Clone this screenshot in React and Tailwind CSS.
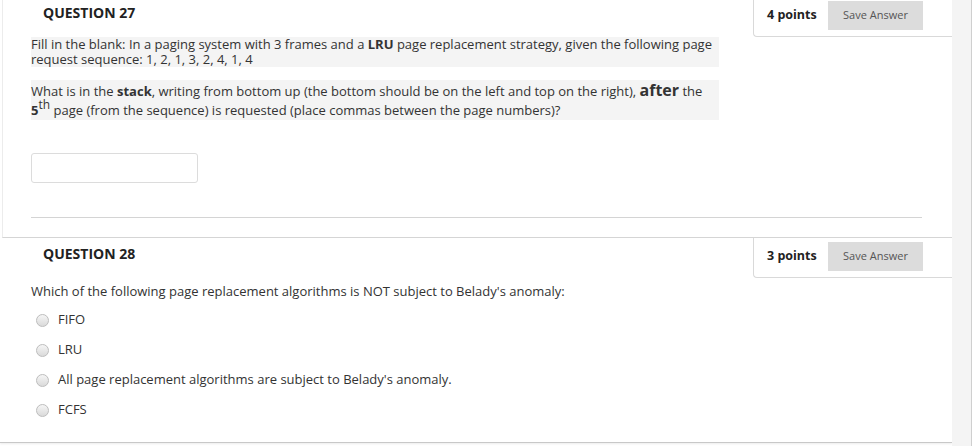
const Radio = ({ label }) => (
  <label className="flex items-center h-[30px]">
    <span className="w-[13px] h-[13px] ml-[5px] rounded-full border border-[#bdbdbd] bg-gradient-to-b from-[#f5f5f5] to-[#dadada]"></span>
    <span className="ml-[9px]">{label}</span>
  </label>
);

const PointsBox = ({ points, top }) => (
  <div
    className={`w-[199px] flex items-start border-l border-b border-[#d9d9d9] rounded-bl-[4px] ${top}`}
  >
    <div className="flex items-center h-[29px]">
      <span className="pl-[13px] w-[74px] font-bold text-[12.5px] text-[#222]">
        {points} points
      </span>
      <button className="w-[95px] h-[29px] bg-[#dcdcdc] text-[11px] text-[#555]">
        Save Answer
      </button>
    </div>
  </div>
);

export default function App() {
  const options = [
    "FIFO",
    "LRU",
    "All page replacement algorithms are subject to Belady's anomaly.",
    "FCFS",
  ];

  return (
    <div
      className="flex w-full h-[446px] bg-white text-[13px] text-[#333] overflow-hidden"
      style={{ fontFamily: '"Open Sans", "Liberation Sans", sans-serif' }}
    >
      <div className="w-[952px] flex flex-col">
        {/* question 27 */}
        <div className="ml-[2px] border-l border-[#ececec] border-b border-b-[#d6d6d6] h-[238px]">
          <div className="flex justify-between items-start">
            <div className="pl-[40px] pt-[5px] text-[14px] font-bold leading-[16px] text-[#222]">
              QUESTION 27
            </div>
            <div className="h-[37px] flex">
              <PointsBox points={4} top="pt-[1px] h-[37px]" />
            </div>
          </div>
          <div className="pl-[28px]">
            <p className="w-[688px] bg-[#f4f4f4] leading-[15px]">
              Fill in the blank: In a paging system with 3 frames and a <b>LRU</b> page
              replacement strategy, given the following page request sequence: 1, 2, 1, 3,
              2, 4, 1, 4
            </p>
            <p className="w-[688px] mt-[13px] pt-[2px] bg-[#f4f4f4] leading-[19px]">
              What is in the <b>stack</b>, writing from bottom up (the bottom should be on the
              left and top on the right),{" "}
              <b className="text-[16px] leading-none">after</b> the{" "}
              <b>
                5<sup className="font-normal text-[12px] leading-none">th</sup>
              </b>{" "}
              page (from the sequence) is requested (place commas between the page numbers)?
            </p>
            <input
              type="text"
              className="block mt-[33px] w-[167px] h-[30px] border border-[#dcdcdc] rounded-[3px] outline-none"
            />
            <div className="mt-[34px] w-[891px] h-px bg-[#d4d4d4]"></div>
          </div>
        </div>

        {/* question 28 */}
        <div className="flex-1 border-b border-[#c8c8c8] shadow-[0_1px_2px_rgba(0,0,0,0.08)] mb-[3px]">
          <div className="flex justify-between items-start">
            <div className="pl-[43px] pt-[8px] text-[14px] font-bold leading-[16px] text-[#222]">
              QUESTION 28
            </div>
            <PointsBox points={3} top="pt-[4px] h-[40px]" />
          </div>
          <div className="pl-[31px]">
            <p className="mt-[5px] leading-[16px]">
              Which of the following page replacement algorithms is NOT subject to Belady's
              anomaly:
            </p>
            <div className="mt-[6px] flex flex-col">
              {options.map((o, i) => (
                <Radio key={i} label={o} />
              ))}
            </div>
          </div>
        </div>
      </div>
      <div className="w-[20px] bg-[#f4f4f4] border-r border-[#cfcfcf]"></div>
    </div>
  );
}
